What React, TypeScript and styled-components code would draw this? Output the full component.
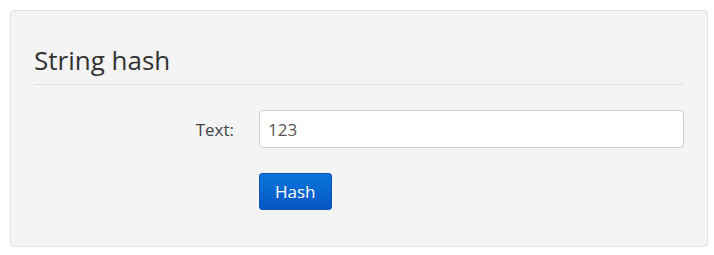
import styled, { createGlobalStyle } from 'styled-components';

const GlobalStyle = createGlobalStyle`
  body {
    margin: 0;
    background: #ffffff;
    font-family: 'Open Sans', 'Liberation Sans', sans-serif;
    color: #333333;
  }
`;

const Page = styled.div`
  padding: 10px 6px 0 10px;
`;

const Panel = styled.div`
  background: #f4f4f4;
  border: 1px solid #e2e2e2;
  border-radius: 4px;
  padding: 32px 23px 36px 23px;
  box-shadow: 0 1px 1px rgba(0, 0, 0, 0.04);
`;

const Title = styled.h2`
  margin: 0;
  font-size: 26px;
  font-weight: 400;
  line-height: 34px;
  color: #333333;
  padding-bottom: 7px;
  border-bottom: 1px solid #e0e0e0;
`;

const Form = styled.div`
  display: grid;
  grid-template-columns: 200px 1fr;
  column-gap: 25px;
  row-gap: 25px;
  margin-top: 25px;
  align-items: center;
`;

const Label = styled.label`
  justify-self: end;
  font-size: 17px;
  color: #444444;
`;

const Input = styled.input`
  box-sizing: border-box;
  height: 38px;
  width: 100%;
  padding: 0 8px;
  border: 1px solid #cccccc;
  border-radius: 4px;
  background: #ffffff;
  font-family: inherit;
  font-size: 17px;
  color: #555555;
  outline: none;
`;

const Button = styled.button`
  grid-column: 2;
  justify-self: start;
  height: 37px;
  padding: 0 15px;
  border: 1px solid #0a56b8;
  border-radius: 3px;
  background: linear-gradient(#0b76dc, #0455c4);
  color: #ffffff;
  font-family: inherit;
  font-size: 17px;
  cursor: pointer;
`;

export default function App() {
  return (
    <Page>
      <GlobalStyle />
      <Panel>
        <Title>String hash</Title>
        <Form>
          <Label htmlFor="text">Text:</Label>
          <Input id="text" defaultValue="123" />
          <Button>Hash</Button>
        </Form>
      </Panel>
    </Page>
  );
}
